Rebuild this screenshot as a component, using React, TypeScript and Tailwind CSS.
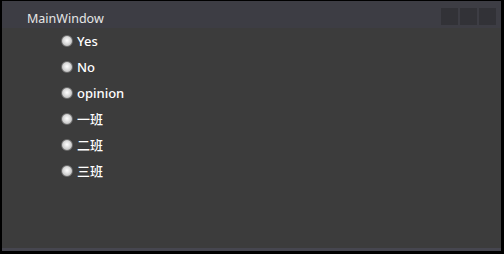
import React from 'react';

const options = ['Yes', 'No', 'opinion', '一班', '二班', '三班'];

const Radio = ({ label }: { label: string }) => (
  <label className="flex h-[26px] items-center gap-[4px]">
    <span className="h-[12px] w-[12px] rounded-full border border-[#6a6a6a] bg-[radial-gradient(circle_at_50%_45%,#ffffff_0%,#e4e4e4_35%,#a8a8a8_100%)]" />
    <span className="text-[13px] leading-none font-medium text-white">{label}</span>
  </label>
);

export default function App() {
  return (
    <div
      className="flex h-[254px] w-[504px] flex-col border-t border-l-2 border-r-[3px] border-b-[3px] border-black bg-[#3c3c3c]"
      style={{ fontFamily: '"Noto Sans", "Noto Sans CJK SC", sans-serif' }}
    >
      {/* title bar */}
      <div className="flex h-[27px] items-start bg-[#3d3d44] pl-[25px] pr-[5px]">
        <span className="mt-[12px] text-[12.5px] leading-none text-[#e6e6e6]">MainWindow</span>
        <div className="ml-auto mt-[7px] flex gap-[2px]">
          <div className="h-[17px] w-[17px] bg-[#323237]" />
          <div className="h-[17px] w-[17px] bg-[#323237]" />
          <div className="h-[17px] w-[17px] bg-[#323237]" />
        </div>
      </div>

      {/* body */}
      <div className="flex flex-1 flex-col pl-[59px]">
        {options.map((o) => (
          <Radio key={o} label={o} />
        ))}
      </div>
      <div className="h-[3px] bg-[#46464f]" />
    </div>
  );
}
